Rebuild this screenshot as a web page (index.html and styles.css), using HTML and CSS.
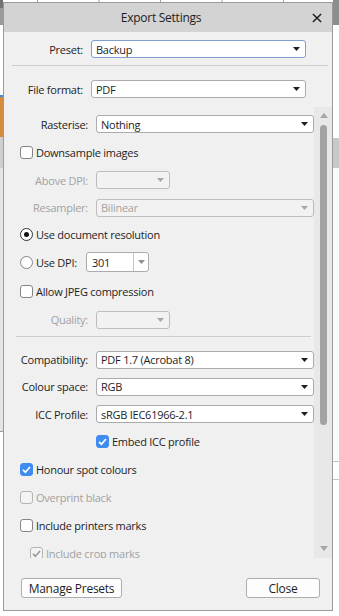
FILE: index.html
```html
<!DOCTYPE html>
<html lang="en">
<head>
  <meta charset="UTF-8" />
  <meta name="viewport" content="width=device-width, initial-scale=1.0"/>
  <title>Export Settings</title>
  <link rel="stylesheet" href="styles.css">
</head>
<body>
  <div class="screen">
    <div class="edge edge-left"></div>
    <div class="middle">
      <div class="ruler"></div>
      <div class="dialog">
        <div class="titlebar">
          <span class="title">Export Settings</span>
          <svg class="close" viewBox="0 0 11 11"><path d="M1 1 L10 10 M10 1 L1 10" stroke="#1e1e1e" stroke-width="1.6" fill="none"/></svg>
        </div>

        <div class="top-fields">
          <div class="field">
            <label>Preset:</label>
            <div class="select focus"><span>Backup</span><svg class="caret" viewBox="0 0 7 4"><path d="M0 0 H7 L3.5 4 Z"/></svg></div>
          </div>
          <div class="rule rule-top"></div>
          <div class="field">
            <label>File format:</label>
            <div class="select"><span>PDF</span><svg class="caret" viewBox="0 0 7 4"><path d="M0 0 H7 L3.5 4 Z"/></svg></div>
          </div>
        </div>

        <div class="scroll">
          <div class="pane">
            <div class="row field">
              <label>Rasterise:</label>
              <div class="select"><span>Nothing</span><svg class="caret" viewBox="0 0 7 4"><path d="M0 0 H7 L3.5 4 Z"/></svg></div>
            </div>
            <div class="row check"><span class="box"></span>Downsample images</div>
            <div class="row field off">
              <label>Above DPI:</label>
              <div class="select short"><span></span><svg class="caret" viewBox="0 0 7 4"><path d="M0 0 H7 L3.5 4 Z"/></svg></div>
            </div>
            <div class="row field off h27">
              <label>Resampler:</label>
              <div class="select"><span>Bilinear</span><svg class="caret" viewBox="0 0 7 4"><path d="M0 0 H7 L3.5 4 Z"/></svg></div>
            </div>
            <div class="row check h27"><span class="radio on"></span>Use document resolution</div>
            <div class="row check">
              <span class="radio"></span><span class="dpi-label">Use DPI:</span>
              <div class="spin"><span>301</span><div class="spin-btn"><svg class="caret" viewBox="0 0 7 4"><path d="M0 0 H7 L3.5 4 Z"/></svg></div></div>
            </div>
            <div class="row check h30"><span class="box"></span>Allow JPEG compression</div>
            <div class="row field off h27">
              <label>Quality:</label>
              <div class="select short"><span></span><svg class="caret" viewBox="0 0 7 4"><path d="M0 0 H7 L3.5 4 Z"/></svg></div>
            </div>
            <div class="rule rule-pane"></div>
            <div class="row field h27">
              <label>Compatibility:</label>
              <div class="select"><span>PDF 1.7 (Acrobat 8)</span><svg class="caret" viewBox="0 0 7 4"><path d="M0 0 H7 L3.5 4 Z"/></svg></div>
            </div>
            <div class="row field h27">
              <label>Colour space:</label>
              <div class="select"><span>RGB</span><svg class="caret" viewBox="0 0 7 4"><path d="M0 0 H7 L3.5 4 Z"/></svg></div>
            </div>
            <div class="row field">
              <label>ICC Profile:</label>
              <div class="select"><span>sRGB IEC61966-2.1</span><svg class="caret" viewBox="0 0 7 4"><path d="M0 0 H7 L3.5 4 Z"/></svg></div>
            </div>
            <div class="row field h27">
              <span></span>
              <div class="inline-check"><span class="box on"><svg viewBox="0 0 13 13"><path d="M3 6.8 L5.4 9.2 L10 4"/></svg></span>Embed ICC profile</div>
            </div>
            <div class="row check"><span class="box on"><svg viewBox="0 0 13 13"><path d="M3 6.8 L5.4 9.2 L10 4"/></svg></span>Honour spot colours</div>
            <div class="row check off"><span class="box"></span>Overprint black</div>
            <div class="row check"><span class="box"></span>Include printers marks</div>
            <div class="row check off sub"><span class="box on"><svg viewBox="0 0 13 13"><path d="M3 6.8 L5.4 9.2 L10 4"/></svg></span>Include crop marks</div>
          </div>
          <div class="vbar">
            <svg class="arrow" viewBox="0 0 8 5"><path d="M0 5 L4 0 L8 5 Z"/></svg>
            <div class="thumb"></div>
            <svg class="arrow arrow-down" viewBox="0 0 8 5"><path d="M0 0 L8 0 L4 5 Z"/></svg>
          </div>
        </div>

        <div class="footer">
          <button class="btn btn-wide">Manage Presets</button>
          <button class="btn">Close</button>
        </div>
      </div>
      <div class="below"></div>
    </div>
    <div class="edge edge-right"></div>
  </div>
</body>
</html>
```

FILE: styles.css
```css
* {
  box-sizing: border-box;
}

body {
  margin: 0;
  font-family: "Open Sans", "Noto Sans", sans-serif;
  font-size: 11px;
  letter-spacing: -0.25px;
  color: #1e1e1e;
  background-color: #ffffff;
}

.screen {
  display: flex;
  width: 339px;
  height: 616px;
  overflow: hidden;
}

/* bits of the window behind the dialog */
.edge-left {
  width: 3px;
  background: linear-gradient(to bottom, #747474 0 8px, #9a9a9a 8px 25px, #ffffff 25px 95px, #3c8ee0 95px 97px, #d68a3e 97px 137px, #cfcfcf 137px 168px, #e4e4e4 168px 431px, #9a9a9a 431px 432px, #ffffff 432px);
}

.edge-right {
  width: 6px;
  background: linear-gradient(to bottom, #8d8d8d 0 25px, #ffffff 25px 138px, #c8c8c8 138px 168px, #fafafa 168px 461px, #c4c4c4 461px 462px, #ffffff 462px 479px, #c4c4c4 479px 480px, #ffffff 480px);
}

.middle {
  width: 330px;
  display: flex;
  flex-direction: column;
}

.ruler {
  height: 2px;
  background: linear-gradient(to right, #a0a0a0 1px, transparent 1px) 34px 0 / 61.5px 100% repeat-x, #ffffff;
}

.below {
  flex: 1;
  background-color: #ffffff;
}

.dialog {
  height: 609px;
  border: 1px solid #9b9b9b;
  background-color: #f0f0f0;
  display: flex;
  flex-direction: column;
}

.titlebar {
  height: 29px;
  flex: none;
  background-color: #d3d3d3;
  display: flex;
  align-items: center;
  font-size: 12px;
}

.title {
  flex: 1;
  text-align: center;
  padding-left: 6px;
}

.close {
  width: 10px;
  height: 10px;
  margin-right: 10px;
}

/* preset + format */
.top-fields {
  height: 75px;
  flex: none;
  padding: 8px 26px 0 0;
}

.field {
  display: grid;
  grid-template-columns: 79px 1fr;
  column-gap: 8px;
  align-items: center;
}

.field label {
  text-align: right;
}

.rule {
  height: 1px;
  background-color: #cdcdcd;
}

.rule-top {
  margin: 7px -22px 14px 8px;
}

.select {
  height: 18px;
  border: 1px solid #ababab;
  border-radius: 3px;
  background-color: #ffffff;
  display: flex;
  align-items: center;
  padding: 0 5px 0 4px;
  white-space: nowrap;
}

.select.focus {
  border-color: #7f9fcf;
}

.select span {
  flex: 1;
}

.caret {
  width: 7px;
  height: 4px;
  fill: #1e1e1e;
}

/* scrolling part */
.scroll {
  height: 451px;
  flex: none;
  display: flex;
}

.pane {
  flex: 1;
  overflow: hidden;
  padding-top: 3px;
}

.pane .field {
  grid-template-columns: 84px 1fr;
}

.row {
  height: 28px;
}

.row.h27 {
  height: 27px;
}

.row.h30 {
  height: 30px;
}

.select.short {
  width: 74px;
}

.off,
.off label {
  color: #a2a2a2;
}

.off .select {
  background-color: #f2f2f2;
  border-color: #bdbdbd;
}

.off .caret {
  fill: #a8a8a8;
}

.check {
  display: flex;
  align-items: center;
  padding-left: 16px;
}

.check.sub {
  padding-left: 26px;
}

.inline-check {
  display: flex;
  align-items: center;
}

.box,
.radio {
  width: 13px;
  height: 13px;
  flex: none;
  border: 1px solid #858585;
  border-radius: 3px;
  background-color: #ffffff;
  margin-right: 3px;
}

.box svg {
  display: block;
  width: 13px;
  height: 13px;
  margin: -1px;
  fill: none;
  stroke: #ffffff;
  stroke-width: 1.7;
}

.box.on {
  background-color: #3f8cf0;
  border-color: #3f8cf0;
}

.off .box {
  border-color: #b4b4b4;
  background-color: #f4f4f4;
}

.off .box.on svg {
  stroke: #9a9a9a;
}

.radio {
  border-radius: 50%;
  display: flex;
  align-items: center;
  justify-content: center;
}

.radio.on {
  border-color: #333333;
}

.radio.on::after {
  content: "";
  width: 5px;
  height: 5px;
  border-radius: 50%;
  background-color: #111111;
}

.dpi-label {
  width: 42px;
}

.spin {
  width: 63px;
  height: 20px;
  margin-left: 8px;
  border: 1px solid #ababab;
  border-radius: 3px;
  background-color: #ffffff;
  display: flex;
  align-items: center;
}

.spin span {
  flex: 1;
  padding-left: 5px;
}

.spin-btn {
  width: 15px;
  height: 100%;
  border-left: 1px solid #c4c4c4;
  display: flex;
  align-items: center;
  justify-content: center;
}

.spin-btn .caret {
  fill: #8e8e8e;
}

.rule-pane {
  margin: 3px 3px 9px 12px;
}

.vbar {
  width: 18px;
  flex: none;
  background-color: #e8e8e8;
  display: flex;
  flex-direction: column;
  align-items: center;
  padding: 6px 0 0 1px;
}

.arrow {
  width: 8px;
  height: 5px;
  fill: #a6a6a6;
}

.thumb {
  width: 7px;
  height: 300px;
  margin-top: 7px;
  border-radius: 4px;
  background-color: #a3a3a3;
}

.arrow-down {
  margin-top: 121px;
}

/* buttons */
.footer {
  flex: 1;
  display: flex;
  justify-content: space-between;
  padding: 20px 12px 0 17px;
}

.btn {
  width: 74px;
  height: 20px;
  border: 1px solid #adadad;
  border-radius: 3px;
  background-color: #fdfdfd;
  font-family: inherit;
  font-size: 12px;
  letter-spacing: -0.25px;
  color: #1e1e1e;
  padding: 0;
}

.btn-wide {
  width: 101px;
}
```
